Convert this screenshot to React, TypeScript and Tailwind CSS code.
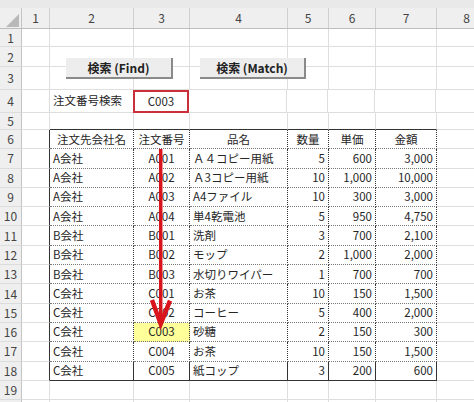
import React from "react";

const colW = [28, 84, 56, 98, 41, 47, 61, 60];
const colLabels = ["1", "2", "3", "4", "5", "6", "7", "8"];

const data: string[][] = [
  ["A会社", "A001", "Ａ４コピー用紙", "5", "600", "3,000"],
  ["A会社", "A002", "Ａ3コピー用紙", "10", "1,000", "10,000"],
  ["A会社", "A003", "A4ファイル", "10", "300", "3,000"],
  ["A会社", "A004", "単4乾電池", "5", "950", "4,750"],
  ["B会社", "B001", "洗剤", "3", "700", "2,100"],
  ["B会社", "B002", "モップ", "2", "1,000", "2,000"],
  ["B会社", "B003", "水切りワイパー", "1", "700", "700"],
  ["C会社", "C001", "お茶", "10", "150", "1,500"],
  ["C会社", "C002", "コーヒー", "5", "400", "2,000"],
  ["C会社", "C003", "砂糖", "2", "150", "300"],
  ["C会社", "C004", "お茶", "10", "150", "1,500"],
  ["C会社", "C005", "紙コップ", "3", "200", "600"],
];

const headers = ["注文先会社名", "注文番号", "品名", "数量", "単価", "金額"];

// row heights, sheet rows 1..5 (rows below are all 19.3px)
const rowH = ["h-[18px]", "h-[20px]", "h-[23px]", "h-[23px]", "h-[17px]"];
const dataH = "h-[19.3px]";

function RowHead({ n, h }: { n?: number; h: string }) {
  return (
    <div className={`${h} w-[22px] shrink-0 flex items-center justify-center bg-[#efefef] border-r border-b border-r-[#c4c4c4] border-b-[#dcdcdc] text-[12px] text-[#444]`}>
      {n}
    </div>
  );
}

function gridCell(i: number, h: string, content?: React.ReactNode, extra = "") {
  return (
    <div
      key={i}
      style={{ width: colW[i] }}
      className={`${h} shrink-0 flex items-center px-[3px] overflow-hidden whitespace-nowrap border-r border-b border-[#dedede] ${extra}`}
    >
      {content}
    </div>
  );
}

export default function App() {
  const rows: React.ReactNode[] = [];

  // rows 1-5
  for (let r = 1; r <= 5; r++) {
    const h = rowH[r - 1];
    rows.push(
      <div key={r} className="flex">
        <RowHead n={r} h={h} />
        {colW.map((_, i) => {
          if (r === 4 && i === 1) return gridCell(i, h, "注文番号検索");
          if (r === 4 && i === 2)
            return (
              <div key={i} style={{ width: colW[i] }} className={`${h} shrink-0 -ml-px flex items-center justify-center border-2 border-[#c9303a]`}>
                C003
              </div>
            );
          if (r === 5 && i >= 1 && i <= 6)
            return gridCell(i, h, null, "border-b-[#333]");
          return gridCell(i, h);
        })}
      </div>
    );
  }

  // row 6 header + data rows 7..18
  const tableRows = [headers, ...data];
  tableRows.forEach((vals, k) => {
    const r = 6 + k;
    const last = k === tableRows.length - 1;
    const isHead = k === 0;
    rows.push(
      <div key={r} className="flex">
        <RowHead n={r} h={dataH} />
        {colW.map((_, i) => {
          if (i === 0) return gridCell(i, dataH, null, "border-r-[#333]");
          if (i === 7) return gridCell(i, dataH);
          const v = vals[i - 1];
          let align = "justify-start";
          if (isHead || i === 2) align = "justify-center";
          else if (i >= 4) align = "justify-end";
          const bottom = last ? "border-b-[#333]" : "border-b-[#777] border-dotted";
          const yellow = !isHead && v === "C003" ? "bg-[#ffff99]" : "";
          return (
            <div
              key={i}
              style={{ width: colW[i] }}
              className={`${dataH} shrink-0 flex items-center ${align} px-[3px] whitespace-nowrap overflow-hidden border-b border-r border-r-[#333] ${bottom} ${yellow}`}
            >
              {v}
            </div>
          );
        })}
      </div>
    );
  });

  // row 19 and the top of row 20
  [19, 20].forEach((r) => {
    rows.push(
      <div key={r} className="flex">
        <RowHead n={r === 19 ? r : undefined} h={dataH} />
        {colW.map((_, i) => gridCell(i, dataH))}
      </div>
    );
  });

  return (
    <div
      className="relative w-[474px] h-[402px] overflow-hidden bg-white text-[11.5px] text-[#262626]"
      style={{ fontFamily: '"Noto Sans CJK JP", "Noto Sans", sans-serif' }}
    >
      <div className="h-[8px] bg-[#e9e9e9]" />
      {/* column headers */}
      <div className="flex h-[21px] bg-[#efefef] border-b border-[#bdbdbd]">
        <div className="w-[22px] shrink-0 border-r border-[#c4c4c4] relative">
          <svg width="22" height="21" className="absolute left-0 top-0">
            <polygon points="19,6 19,19 6,19" fill="#b9b9b9" />
          </svg>
        </div>
        {colW.map((w, i) => (
          <div key={i} style={{ width: w }} className="shrink-0 flex items-center justify-center border-r border-[#cfcfcf] text-[12px] text-[#444]">
            {colLabels[i]}
          </div>
        ))}
      </div>
      {rows}

      {/* shape buttons */}
      <div className="absolute left-[66px] top-[58px] w-[107px] h-[21px] flex items-center justify-center bg-[#ededed] border-r-2 border-b-2 border-[#8a8a8a] font-bold text-[12px] text-[#222]">
        検索 (Find)
      </div>
      <div className="absolute left-[200px] top-[58px] w-[106px] h-[21px] flex items-center justify-center bg-[#ededed] border-r-2 border-b-2 border-[#8a8a8a] font-bold text-[12px] text-[#222]">
        検索 (Match)
      </div>

      {/* red arrow */}
      <svg className="absolute left-[148px] top-[148px]" width="26" height="182" viewBox="0 0 26 182">
        <line x1="12.7" y1="1" x2="12.7" y2="174" stroke="#d8141c" strokeWidth="3.5" />
        <polyline points="4,152 12.7,176 22,152.7" fill="none" stroke="#d8141c" strokeWidth="4.5" strokeLinejoin="miter" />
      </svg>
    </div>
  );
}
